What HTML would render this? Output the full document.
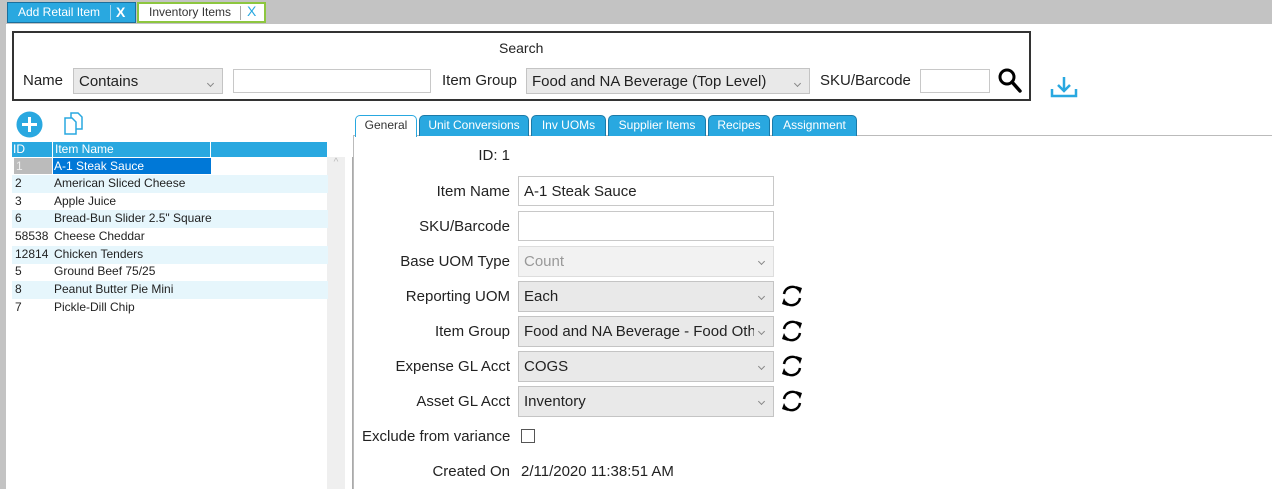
<!DOCTYPE html>
<html><head><style>
*{box-sizing:border-box;margin:0;padding:0}
body{width:1272px;height:489px;overflow:hidden;background:#fff;font-family:"Liberation Sans",sans-serif;position:relative;color:#222}
.a{position:absolute}
.lbl{font-size:15px;text-align:right;width:160px;left:350px}
.inp{border:1px solid #c8c8c8;background:#fff;height:30px;font-size:15px;padding:6px 5px}
.sel{border:1px solid #c4c4c4;background:#e9e9e9;height:31px;font-size:15px;padding:6px 5px;overflow:hidden;white-space:nowrap}
.sel:after{content:"";position:absolute;right:9px;top:12px;width:4px;height:4px;border-right:1px solid #888;border-bottom:1px solid #888;transform:rotate(45deg)}
.row{height:18px;font-size:12px;line-height:17px;left:12px;width:316px}
.row span{position:absolute}
.tab{top:115px;height:21px;background:#29a8e0;border:1px solid #1b7aa8;border-bottom:none;border-radius:5px 5px 0 0;color:#fff;font-size:12px;text-align:center;line-height:19px}
</style></head><body>
<div class="a" style="left:0;top:0;width:1272px;height:24px;background:#c3c3c3"></div>
<div class="a" style="left:0;top:24px;width:6px;height:465px;background:#c3c3c3"></div>
<div class="a" style="left:7px;top:2px;width:129px;height:21px;background:#29a8e0;border:1px solid #1b6f9c;color:#fff;font-size:12px;line-height:19px;padding-left:10px">Add Retail Item<span class="a" style="left:102px;top:2px;height:15px;border-left:1px solid #9fd6f0"></span><b class="a" style="left:108px;top:0;font-size:14px">X</b></div>
<div class="a" style="left:137px;top:2px;width:129px;height:21px;background:#fff;border:2px solid #8dc63f;color:#333;font-size:12px;line-height:17px;padding-left:10px">Inventory Items<span class="a" style="left:101px;top:2px;height:14px;border-left:1px solid #aaa"></span><b class="a" style="left:108px;top:-1px;font-size:14px;color:#29a8e0;font-weight:normal">X</b></div>

<div class="a" style="left:12px;top:31px;width:1019px;height:70px;border:2px solid #333"></div>
<div class="a" style="left:499px;top:40px;font-size:14px">Search</div>
<div class="a" style="left:23px;top:72px;font-size:15px">Name</div>
<div class="a sel" style="left:73px;top:68px;width:150px;height:26px;padding:4px 5px">Contains</div>
<div class="a inp" style="left:233px;top:69px;width:198px;height:24px"></div>
<div class="a" style="left:442px;top:72px;font-size:15px">Item Group</div>
<div class="a sel" style="left:526px;top:68px;width:284px;height:26px;padding:4px 5px">Food and NA Beverage (Top Level)</div>
<div class="a" style="left:820px;top:72px;font-size:15px">SKU/Barcode</div>
<div class="a inp" style="left:920px;top:69px;width:70px;height:24px"></div>
<svg class="a" style="left:997px;top:67px" width="26" height="28"><circle cx="10" cy="10" r="7" fill="none" stroke="#000" stroke-width="3"/><line x1="15" y1="15" x2="23" y2="24" stroke="#000" stroke-width="3.5" stroke-linecap="round"/></svg>
<svg class="a" style="left:1050px;top:76px" width="28" height="22" fill="none" stroke="#29a8e0" stroke-width="2.5"><path d="M14 1v13M8 9l6 6 6-6M2 13v7h24v-7"/></svg>

<svg class="a" style="left:16px;top:111px" width="27" height="27"><circle cx="13.5" cy="13.5" r="13" fill="#29a8e0"/><path d="M13.5 6v15M6 13.5h15" stroke="#fff" stroke-width="3"/></svg>
<svg class="a" style="left:63px;top:112px" width="24" height="24" fill="#fff" stroke="#29a8e0" stroke-width="1.5"><path d="M8 1h7l4 4v12H8z"/><path d="M2 6h7l4 4v12H2z"/></svg>

<div class="a" style="left:12px;top:142px;width:315px;height:15px;background:#29a8e0"></div>
<div class="a" style="left:52px;top:142px;width:1px;height:15px;background:#fff"></div>
<div class="a" style="left:210px;top:142px;width:1px;height:15px;background:#fff"></div>
<div class="a" style="left:13px;top:142px;font-size:12px;color:#fff">ID</div>
<div class="a" style="left:55px;top:142px;font-size:12px;color:#fff">Item Name</div>
<div class="a" style="left:327px;top:157px;width:18px;height:332px;background:#efefef;color:#bbb;font-size:10px;text-align:center">^</div>
<div class="a" style="left:352px;top:157px;width:1px;height:332px;background:#aaa"></div>

<div class="a row" style="top:157px"><span style="left:2px;width:38px;height:16px;top:1px;background:#bbb;color:#eee;padding-left:2px">1</span><span style="left:41px;width:158px;height:16px;top:1px;background:#0078d7;color:#fff;padding-left:1px">A-1 Steak Sauce</span></div>
<div class="a row" style="top:175px;background:#e6f6fc"><span style="left:3px">2</span><span style="left:42px">American Sliced Cheese</span></div>
<div class="a row" style="top:193px"><span style="left:3px">3</span><span style="left:42px">Apple Juice</span></div>
<div class="a row" style="top:210px;background:#e6f6fc"><span style="left:3px">6</span><span style="left:42px">Bread-Bun Slider 2.5" Square</span></div>
<div class="a row" style="top:228px"><span style="left:3px">58538</span><span style="left:42px">Cheese Cheddar</span></div>
<div class="a row" style="top:246px;background:#e6f6fc"><span style="left:3px">12814</span><span style="left:42px">Chicken Tenders</span></div>
<div class="a row" style="top:263px"><span style="left:3px">5</span><span style="left:42px">Ground Beef 75/25</span></div>
<div class="a row" style="top:281px;background:#e6f6fc"><span style="left:3px">8</span><span style="left:42px">Peanut Butter Pie Mini</span></div>
<div class="a row" style="top:299px"><span style="left:3px">7</span><span style="left:42px">Pickle-Dill Chip</span></div>

<div class="a" style="left:353px;top:135px;width:919px;height:1px;background:#bbb"></div>
<div class="a" style="left:353px;top:135px;width:1px;height:354px;background:#bbb"></div>
<div class="a tab" style="left:355px;width:62px;background:#fff;border-color:#29a8e0;color:#333;height:22px">General</div>
<div class="a tab" style="left:419px;width:110px">Unit Conversions</div>
<div class="a tab" style="left:531px;width:75px">Inv UOMs</div>
<div class="a tab" style="left:608px;width:98px">Supplier Items</div>
<div class="a tab" style="left:708px;width:62px">Recipes</div>
<div class="a tab" style="left:772px;width:85px">Assignment</div>

<div class="a lbl" style="top:147px">ID: 1</div>
<div class="a lbl" style="top:183px">Item Name</div>
<div class="a inp" style="left:518px;top:176px;width:256px">A-1 Steak Sauce</div>
<div class="a lbl" style="top:218px">SKU/Barcode</div>
<div class="a inp" style="left:518px;top:211px;width:256px"></div>
<div class="a lbl" style="top:253px">Base UOM Type</div>
<div class="a sel" style="left:518px;top:246px;width:256px;background:#f2f2f2;border-color:#ddd;color:#999">Count</div>
<div class="a lbl" style="top:288px">Reporting UOM</div>
<div class="a sel" style="left:518px;top:281px;width:256px">Each</div>
<div class="a lbl" style="top:323px">Item Group</div>
<div class="a sel" style="left:518px;top:316px;width:256px"><span style="display:block;width:230px;overflow:hidden">Food and NA Beverage - Food Other</span></div>
<div class="a lbl" style="top:358px">Expense GL Acct</div>
<div class="a sel" style="left:518px;top:351px;width:256px">COGS</div>
<div class="a lbl" style="top:393px">Asset GL Acct</div>
<div class="a sel" style="left:518px;top:386px;width:256px">Inventory</div>
<svg width="0" height="0" style="position:absolute"><defs><g id="r"><path d="M4 10A8.5 8.5 0 0 1 19 6" fill="none" stroke="#000" stroke-width="2.5"/><path d="M20 14A8.5 8.5 0 0 1 5 18" fill="none" stroke="#000" stroke-width="2.5"/><path d="M16 2l6 2-2 6z"/><path d="M8 22l-6-2 2-6z"/></g></defs></svg>
<svg class="a" style="left:780px;top:284px" width="24" height="24"><use href="#r"/></svg>
<svg class="a" style="left:780px;top:319px" width="24" height="24"><use href="#r"/></svg>
<svg class="a" style="left:780px;top:354px" width="24" height="24"><use href="#r"/></svg>
<svg class="a" style="left:780px;top:389px" width="24" height="24"><use href="#r"/></svg>
<div class="a" style="left:362px;top:428px;font-size:15px">Exclude from variance</div>
<div class="a" style="left:521px;top:429px;width:14px;height:14px;border:1px solid #555;background:#fff"></div>
<div class="a lbl" style="top:463px">Created On</div>
<div class="a" style="left:521px;top:463px;font-size:15px">2/11/2020 11:38:51 AM</div>
</body></html>
